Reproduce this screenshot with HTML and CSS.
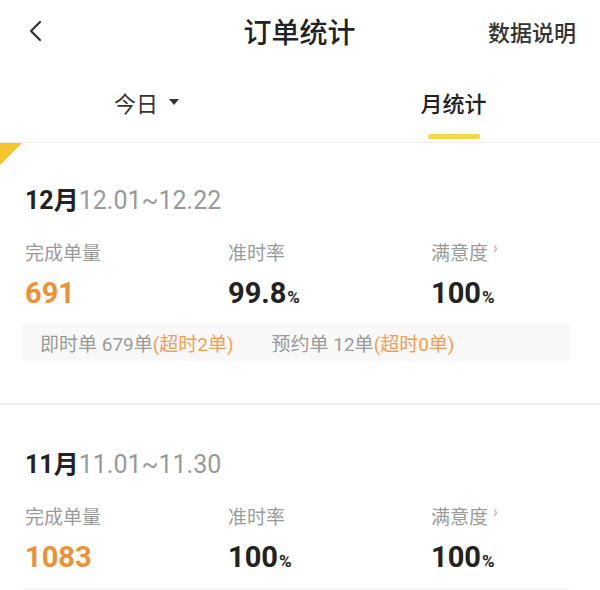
FILE: index.html
```html
<!DOCTYPE html>
<html lang="zh-CN">
<head>
    <meta charset="UTF-8">
    <meta name="viewport" content="width=device-width, initial-scale=1.0">
    <title>订单统计</title>
    <link rel="stylesheet" href="styles.css">
</head>
<body>
    <header class="topbar">
        <a class="back" aria-label="返回">
            <svg width="16" height="22" viewBox="0 0 16 22"><path d="M13 2 L4 11 L13 20" fill="none" stroke="#333" stroke-width="2.2" stroke-linecap="round" stroke-linejoin="round"/></svg>
        </a>
        <h1>订单统计</h1>
        <a class="help">数据说明</a>
    </header>

    <nav class="tabs">
        <div class="tab today">今日<span class="caret"></span></div>
        <div class="tab active">月统计</div>
    </nav>

    <main>
        <section class="month">
            <span class="corner"></span>
            <h2><b>12月</b>12.01~12.22</h2>
            <div class="stats">
                <div class="stat">
                    <p class="label">完成单量</p>
                    <p class="value orange">691</p>
                </div>
                <div class="stat">
                    <p class="label">准时率</p>
                    <p class="value">99.8<small>%</small></p>
                </div>
                <div class="stat">
                    <p class="label">满意度<i class="more">›</i></p>
                    <p class="value">100<small>%</small></p>
                </div>
            </div>
            <div class="note">
                <span>即时单 679单<em>(超时2单)</em></span>
                <span>预约单 12单<em>(超时0单)</em></span>
            </div>
        </section>

        <section class="month">
            <h2><b>11月</b>11.01~11.30</h2>
            <div class="stats">
                <div class="stat">
                    <p class="label">完成单量</p>
                    <p class="value orange">1083</p>
                </div>
                <div class="stat">
                    <p class="label">准时率</p>
                    <p class="value">100<small>%</small></p>
                </div>
                <div class="stat">
                    <p class="label">满意度<i class="more">›</i></p>
                    <p class="value">100<small>%</small></p>
                </div>
            </div>
            <div class="note"></div>
        </section>
    </main>
</body>
</html>
```

FILE: styles.css
```css
body {
    font-family: Roboto, "Noto Sans CJK SC", sans-serif;
    margin: 0;
    padding: 0;
    background: #fff;
    color: #222;
}
.topbar {
    height: 62px;
    display: flex;
    align-items: center;
    justify-content: space-between;
    padding: 0 22px 0 27px;
}
.back {
    width: 90px;
    display: flex;
    align-items: center;
}
.topbar h1 {
    margin: 0 0 0 -6px;
    font-size: 28px;
    font-weight: 500;
    color: #222;
}
.help {
    width: 90px;
    font-size: 22px;
    font-weight: 500;
    color: #333;
    white-space: nowrap;
}
.tabs {
    display: flex;
    height: 80px;
    border-bottom: 1px solid #ececec;
}
.tab {
    flex: 1;
    display: flex;
    align-items: center;
    justify-content: center;
    font-size: 22px;
    color: #333;
    position: relative;
}
.tab.today {
    padding-right: 14px;
}
.tab.active {
    font-weight: 500;
    color: #222;
}
.tab.active::after {
    content: "";
    position: absolute;
    bottom: 3px;
    left: 50%;
    width: 52px;
    height: 5px;
    margin-left: -26px;
    border-radius: 2px;
    background: #f5d447;
}
.caret {
    width: 0;
    height: 0;
    margin-left: 11px;
    border-left: 5px solid transparent;
    border-right: 5px solid transparent;
    border-top: 6px solid #333;
}
.month {
    position: relative;
    padding: 44px 30px 42px 25px;
    border-bottom: 2px solid #efefef;
}
.month:first-child {
    padding-top: 42px;
}
.corner {
    position: absolute;
    top: 0;
    left: 0;
    width: 22px;
    height: 22px;
    background: #f6c42c;
    clip-path: polygon(0 0, 100% 0, 0 100%);
}
.month h2 {
    margin: 0;
    font-size: 25px;
    line-height: 32px;
    font-weight: 400;
    color: #999;
}
.month h2 b {
    color: #222;
    font-weight: 700;
}
.stats {
    display: grid;
    grid-template-columns: 203px 203px 1fr;
    margin-top: 25px;
}
.stat p {
    margin: 0;
}
.label {
    font-size: 19px;
    line-height: 24px;
    height: 24px;
    color: #9a9a9a;
}
.more {
    font-style: normal;
    font-size: 16px;
    line-height: 0;
    margin-left: 5px;
    position: relative;
    top: -7px;
    color: #aaa;
}
.value {
    margin-top: 10px !important;
    font-size: 29px;
    line-height: 34px;
    font-weight: 700;
    color: #222;
}
.value small {
    font-size: 17px;
    font-weight: 700;
    margin-left: 1px;
}
.value.orange {
    color: #ee9135;
}
.note {
    margin: 9px 0 0 -3px;
    height: 38px;
    display: flex;
    align-items: center;
    gap: 38px;
    padding-left: 18px;
    background: #f8f8f8;
    font-size: 19px;
    color: #9a9a9a;
}
.note em {
    font-style: normal;
    color: #f2a04f;
}
```
